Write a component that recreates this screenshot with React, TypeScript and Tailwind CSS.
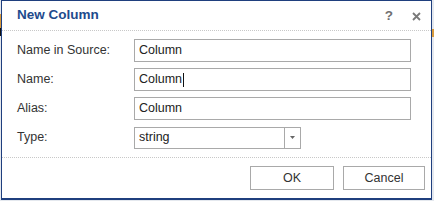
import React from 'react'

const font = { fontFamily: '"Liberation Sans", Arial, sans-serif' }

interface FieldRowProps {
  label: string
  value: string
  caret?: boolean
}

const FieldRow: React.FC<FieldRowProps> = ({ label, value, caret }) => (
  <div className="flex items-center h-[23px]">
    <div className="w-[117px] text-[12.5px] text-[#333]">{label}</div>
    <div className="w-[277px] h-[23px] border border-[#a9a9a9] bg-white flex items-center pl-[4px] text-[12.5px] text-[#222]">
      <span>{value}</span>
      {caret && <span className="w-px h-[14px] bg-[#111] ml-px" />}
    </div>
  </div>
)

export default function App() {
  return (
    <div className="w-[434px] h-[201px] bg-[#e4e8ee] flex overflow-hidden" style={font}>
      {/* left strip of the page behind the dialog */}
      <div className="w-px flex flex-col">
        <div className="h-[14px]" />
        <div className="h-[14px] bg-[#d89a3c]" />
        <div className="h-[8px] bg-[#111]" />
      </div>

      {/* dialog */}
      <div className="w-[431px] h-[200px] bg-white border border-[#1f3f7e] border-b-2 flex flex-col">
        {/* title bar */}
        <div className="h-[30px] flex items-center justify-between pl-[15px] pr-[10px] border-b border-dotted border-[#c8c8c8]">
          <span className="text-[13.5px] font-bold text-[#1e4a8c]">New Column</span>
          <div className="flex items-center gap-[19px] pt-px">
            <span className="text-[13.5px] font-bold text-[#707070] leading-none">?</span>
            <svg width="9" height="9" viewBox="0 0 9 9">
              <path d="M1 1L8 8M8 1L1 8" stroke="#7a7a7a" strokeWidth="1.8" />
            </svg>
          </div>
        </div>

        {/* fields */}
        <div className="flex flex-col gap-[6px] pt-[8px] pb-[8px] pl-[15px] border-b border-dotted border-[#c8c8c8]">
          <FieldRow label="Name in Source:" value="Column" />
          <FieldRow label="Name:" value="Column" caret />
          <FieldRow label="Alias:" value="Column" />
          <div className="flex items-center h-[23px]">
            <div className="w-[117px] text-[12.5px] text-[#333]">Type:</div>
            <div className="w-[167px] h-[22px] border border-[#a9a9a9] bg-white flex text-[12.5px] text-[#222]">
              <div className="flex-1 flex items-center pl-[4px]">string</div>
              <div className="w-[16px] border-l border-[#a9a9a9] flex items-center justify-center">
                <svg width="5" height="3" viewBox="0 0 5 3">
                  <path d="M0 0H5L2.5 3Z" fill="#666" />
                </svg>
              </div>
            </div>
          </div>
        </div>

        {/* footer */}
        <div className="flex justify-end gap-[9px] pt-[8px] pr-[6px]">
          <button className="w-[84px] h-[24px] border border-[#a9a9a9] bg-white text-[12.5px] text-[#333]">OK</button>
          <button className="w-[82px] h-[24px] border border-[#a9a9a9] bg-white text-[12.5px] text-[#333]">Cancel</button>
        </div>
      </div>

      {/* right strip */}
      <div className="flex-1 flex flex-col">
        <div className="h-[29px]" />
        <div className="h-[8px] bg-[#d89a3c]" />
      </div>
    </div>
  )
}
